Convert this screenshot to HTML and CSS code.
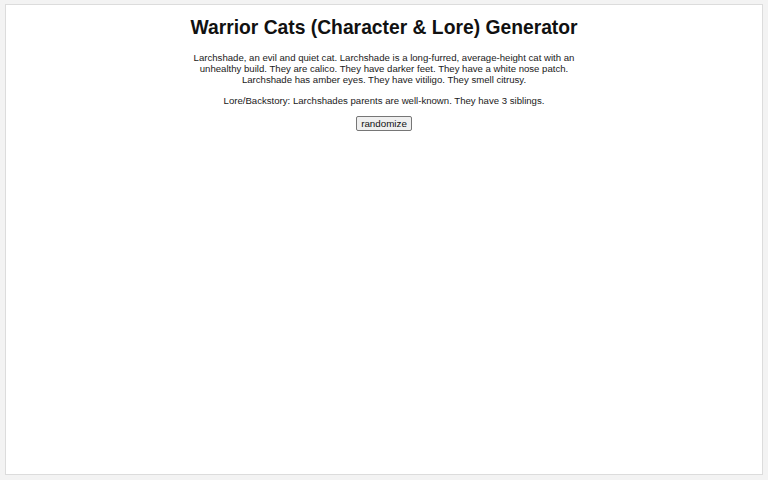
FILE: index.html
```html
<!DOCTYPE html>
<html lang="en">
<head>
  <meta charset="UTF-8">
  <title>Warrior Cats Generator</title>
  <link rel="stylesheet" href="styles.css">
</head>
<body>
  <div class="page">
    <h1>Warrior Cats (Character &amp; Lore) Generator</h1>
    <p class="desc" id="description">Larchshade, an evil and quiet cat. Larchshade is a long-furred, average-height cat with an unhealthy build. They are calico. They have darker feet. They have a white nose patch. Larchshade has amber eyes. They have vitiligo. They smell citrusy.</p>
    <p class="desc" id="lore">Lore/Backstory: Larchshades parents are well-known. They have 3 siblings.</p>
    <button type="button" class="randomize">randomize</button>
  </div>
</body>
</html>
```

FILE: styles.css
```css
body {
  background: #f3f3f3;
  font-family: 'Liberation Sans', Arial, sans-serif;
  margin: 0;
  padding: 4px 5px 5px 5px;
  height: 100vh;
  box-sizing: border-box;
}
.page {
  background: #fff;
  border: 1px solid #dcdcdc;
  height: 100%;
  box-sizing: border-box;
  text-align: center;
  padding-top: 12px;
}
h1 {
  font-size: 19.3px;
  line-height: 22px;
  margin: 0 0 13px 0;
  color: #111;
}
.desc {
  font-size: 9.6px;
  line-height: 11px;
  color: #1a1a1a;
  max-width: 384px;
  margin: 0 auto 10px auto;
}
.randomize {
  display: block;
  margin: 10px auto 0 auto;
  font-family: 'Liberation Sans', Arial, sans-serif;
  font-size: 9.8px;
  line-height: 11px;
  padding: 1px 4px;
  background: #efefef;
  border: 1px solid #767676;
  border-radius: 2px;
  color: #111;
}
```
